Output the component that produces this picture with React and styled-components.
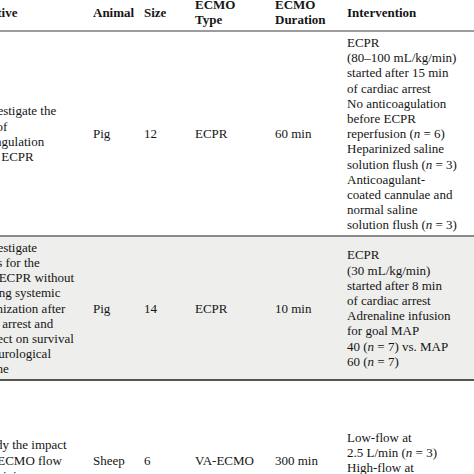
import React from 'react'
import styled, { createGlobalStyle } from 'styled-components'

const GlobalStyle = createGlobalStyle`
  html, body {
    margin: 0;
    padding: 0;
    background: #ffffff;
  }
  body {
    font-family: "Liberation Serif", "Times New Roman", serif;
    color: #151515;
  }
`

const Frame = styled.div`
  width: 474px;
  height: 474px;
  overflow: hidden;
  background: #ffffff;
`

const Table = styled.div`
  margin-top: -3px;
  margin-left: -36px;
  width: 550px;
  font-size: 13px;
  line-height: 15.2px;
`

const Row = styled.div`
  display: grid;
  grid-template-columns: 129px 51px 51px 80px 72px 141px;
  align-items: center;
  min-height: ${p => p.$minHeight || 0}px;
  background: ${p => (p.$shaded ? '#eeeeec' : '#ffffff')};
  border-bottom: 2px solid ${p => p.$line || '#8c8c8c'};
`

const HeadRow = styled(Row)`
  font-weight: bold;
  border-bottom: 2px solid #9c9c9c;
`

const Cell = styled.div`
  padding: ${p => (p.$head ? '0 0 3px' : '2.6px 0')};
  white-space: nowrap;
`

const Line = styled.span`
  display: block;
`

const I = styled.i`
  font-style: italic;
`

const rows = [
  {
    objective: ['To investigate the', 'effect of', 'anticoagulation', 'during ECPR'],
    animal: 'Pig',
    size: '12',
    type: 'ECPR',
    duration: '60 min',
    intervention: [
      'ECPR',
      '(80–100 mL/kg/min)',
      'started after 15 min',
      'of cardiac arrest',
      'No anticoagulation',
      'before ECPR',
      <>reperfusion (<I>n</I> = 6)</>,
      'Heparinized saline',
      <>solution flush (<I>n</I> = 3)</>,
      'Anticoagulant-',
      'coated cannulae and',
      'normal saline',
      <>solution flush (<I>n</I> = 3)</>,
    ],
    line: '#8a8a8a',
  },
  {
    objective: [
      'To investigate',
      'options for the',
      'use of ECPR without',
      'requiring systemic',
      'heparinization after',
      'a heart arrest and',
      'the effect on survival',
      'and neurological',
      'outcome',
    ],
    animal: 'Pig',
    size: '14',
    type: 'ECPR',
    duration: '10 min',
    intervention: [
      'ECPR',
      '(30 mL/kg/min)',
      'started after 8 min',
      'of cardiac arrest',
      'Adrenaline infusion',
      'for goal MAP',
      <>40 (<I>n</I> = 7) vs. MAP</>,
      <>60 (<I>n</I> = 7)</>,
    ],
    shaded: true,
    line: '#555555',
  },
  {
    objective: ['To study the impact', 'of the ECMO flow', 'rate on injury'],
    animal: 'Sheep',
    size: '6',
    type: 'VA-ECMO',
    duration: '300 min',
    intervention: [
      'Low-flow at',
      <>2.5 L/min (<I>n</I> = 3)</>,
      'High-flow at',
      <>4.5 L/min (<I>n</I> = 3)</>,
    ],
    minHeight: 158,
    line: '#8a8a8a',
  },
]

const Lines = ({ items }) => (
  <>
    {items.map((t, i) => (
      <Line key={i}>{t}</Line>
    ))}
  </>
)

export default function App() {
  return (
    <Frame>
      <GlobalStyle />
      <Table>
        <HeadRow>
          <Cell $head>Objective</Cell>
          <Cell $head>Animal</Cell>
          <Cell $head>Size</Cell>
          <Cell $head>
            <Line>ECMO</Line>
            <Line>Type</Line>
          </Cell>
          <Cell $head>
            <Line>ECMO</Line>
            <Line>Duration</Line>
          </Cell>
          <Cell $head>Intervention</Cell>
        </HeadRow>
        {rows.map((r, i) => (
          <Row key={i} $shaded={r.shaded} $line={r.line} $minHeight={r.minHeight}>
            <Cell>
              <Lines items={r.objective} />
            </Cell>
            <Cell>{r.animal}</Cell>
            <Cell>{r.size}</Cell>
            <Cell>{r.type}</Cell>
            <Cell>{r.duration}</Cell>
            <Cell>
              <Lines items={r.intervention} />
            </Cell>
          </Row>
        ))}
      </Table>
    </Frame>
  )
}
